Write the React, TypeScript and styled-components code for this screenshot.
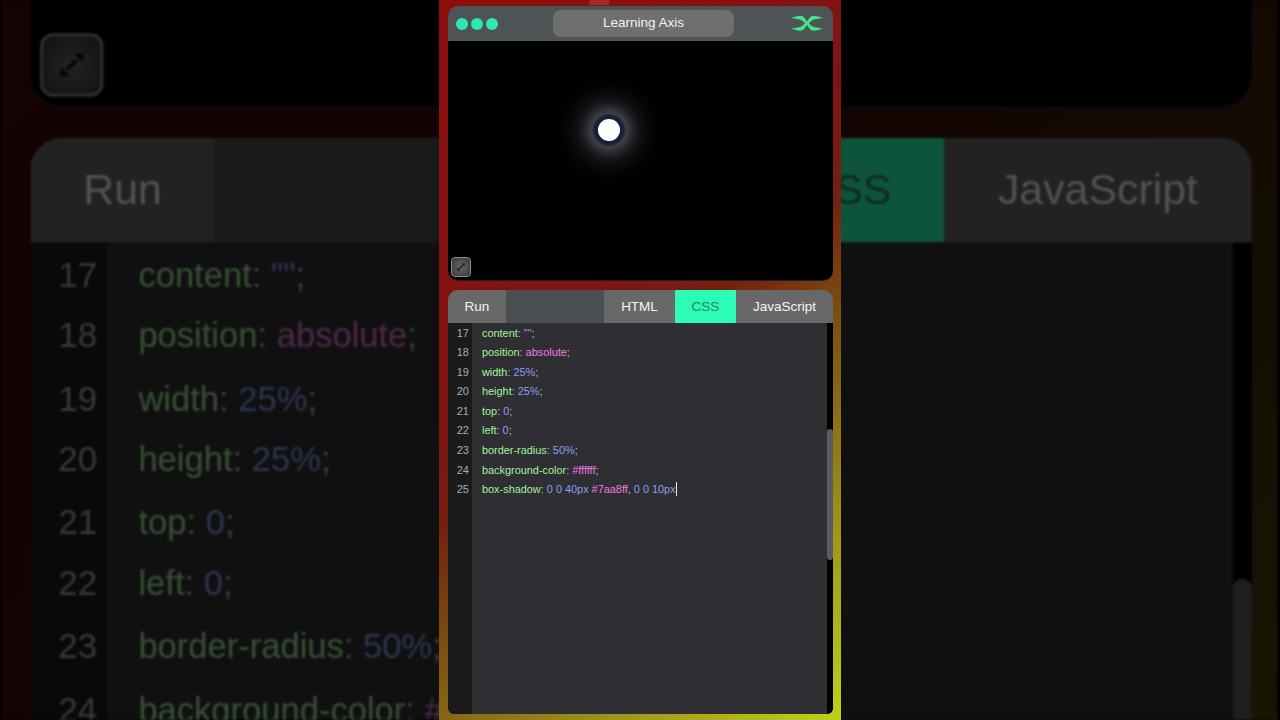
import styled, { createGlobalStyle } from 'styled-components';

type TokenKind = 'prop' | 'punct' | 'num' | 'pink';

const CODE_LINES: { no: number; tokens: [TokenKind, string][]; caret?: boolean }[] = [
  { no: 17, tokens: [['prop', 'content'], ['punct', ': '], ['num', '""'], ['punct', ';']] },
  { no: 18, tokens: [['prop', 'position'], ['punct', ': '], ['pink', 'absolute'], ['punct', ';']] },
  { no: 19, tokens: [['prop', 'width'], ['punct', ': '], ['num', '25%'], ['punct', ';']] },
  { no: 20, tokens: [['prop', 'height'], ['punct', ': '], ['num', '25%'], ['punct', ';']] },
  { no: 21, tokens: [['prop', 'top'], ['punct', ': '], ['num', '0'], ['punct', ';']] },
  { no: 22, tokens: [['prop', 'left'], ['punct', ': '], ['num', '0'], ['punct', ';']] },
  { no: 23, tokens: [['prop', 'border-radius'], ['punct', ': '], ['num', '50%'], ['punct', ';']] },
  { no: 24, tokens: [['prop', 'background-color'], ['punct', ': '], ['pink', '#ffffff'], ['punct', ';']] },
  {
    no: 25,
    tokens: [
      ['prop', 'box-shadow'],
      ['punct', ': '],
      ['num', '0 0 40px '],
      ['pink', '#7aa8ff'],
      ['punct', ', '],
      ['num', '0 0 10px'],
    ],
    caret: true,
  },
];

const TOKEN_COLORS: Record<TokenKind, string> = {
  prop: '#a6f29a',
  punct: '#b9bcc0',
  num: '#8b9df2',
  pink: '#f07ae0',
};

const GlobalStyle = createGlobalStyle`
  html, body {
    margin: 0;
    padding: 0;
    background: #000;
  }
`;

const Page = styled.div`
  position: relative;
  width: 1280px;
  height: 720px;
  overflow: hidden;
  display: flex;
  justify-content: center;
  background: #000;
  font-family: "Liberation Sans", Arial, sans-serif;
`;

// Enlarged, dimmed copy of the same window behind the real one
const Backdrop = styled.div`
  position: absolute;
  inset: 0;
  overflow: hidden;
  filter: brightness(0.33) blur(0.8px);
`;

const BackdropZoom = styled.div`
  width: 402px;
  height: 720px;
  transform-origin: 0 0;
  transform: translate(2px, -782px) scale(3.172);
`;

const Frame = styled.div<{ $muted?: boolean }>`
  position: relative;
  box-sizing: border-box;
  width: 402px;
  height: 720px;
  flex: none;
  display: flex;
  flex-direction: column;
  padding: 6px 8px 6px 9px;
  background: ${props => (props.$muted ? 'linear-gradient(rgba(0, 0, 0, 0.5), rgba(0, 0, 0, 0.5)),' : '')}
    linear-gradient(
      140deg,
      #8e0d0d 0%,
      #7f1414 40%,
      #74200f 50%,
      #7a4a10 60%,
      #8a6c16 70%,
      #a5a01c 85%,
      #bdd216 100%
    );

  &::before {
    content: '';
    position: absolute;
    top: 0;
    left: 150px;
    width: 20px;
    height: 5px;
    background: #a42a2a;
  }
`;

const TitleBar = styled.div`
  height: 35px;
  flex: none;
  display: flex;
  align-items: center;
  padding: 0 9px 0 8px;
  background: #4e5356;
  border-radius: 10px 10px 0 0;
`;

const Dots = styled.div`
  display: flex;
  gap: 3px;
  width: 97px;
  margin-top: 1px;
`;

const Dot = styled.span`
  width: 12px;
  height: 12px;
  border-radius: 50%;
  background: #2de8b0;
`;

const TitlePill = styled.div`
  box-sizing: border-box;
  width: 181px;
  height: 27px;
  padding-bottom: 2px;
  display: flex;
  align-items: center;
  justify-content: center;
  border-radius: 8px;
  background: #6f6f6f;
  color: #f2f2f2;
  font-size: 13.5px;
`;

const Logo = styled.svg`
  width: 34px;
  height: 17px;
  margin-left: auto;
`;

const Preview = styled.div`
  position: relative;
  height: 240px;
  flex: none;
  background: #000;
  border-radius: 0 0 10px 10px;
  box-shadow: inset 0 -1px 0 rgba(255, 255, 255, 0.12);
`;

const GlowBall = styled.div`
  position: absolute;
  left: 150px;
  top: 78px;
  width: 22px;
  height: 22px;
  border-radius: 50%;
  background: #fff;
  box-shadow: 0 0 2px 5px #182038, 0 0 12px 8px #50535c, 0 0 30px 14px #4a4c55;
`;

const ExpandButton = styled.div`
  position: absolute;
  left: 3px;
  bottom: 4px;
  box-sizing: border-box;
  width: 20px;
  height: 20px;
  display: flex;
  align-items: center;
  justify-content: center;
  border: 1px solid #8c8c8c;
  border-radius: 4px;
  background: radial-gradient(circle, #6a6a6a 0%, #343434 100%);
`;

const TabBar = styled.div`
  height: 33px;
  flex: none;
  margin-top: 9px;
  display: flex;
  overflow: hidden;
  background: #4a4f52;
  border-radius: 10px 10px 0 0;
`;

const Tab = styled.div<{ $width: number; $active?: boolean }>`
  width: ${props => props.$width}px;
  display: flex;
  align-items: center;
  justify-content: center;
  font-size: 13.5px;
  background: ${props => (props.$active ? '#2bfcb6' : '#686868')};
  color: ${props => (props.$active ? '#2f7f66' : '#f4f4f4')};
`;

const TabSpacer = styled.div`
  flex: 1;
`;

const Editor = styled.div`
  flex: 1;
  min-height: 0;
  display: flex;
  overflow: hidden;
  background: #2f2f33;
  border-radius: 0 0 6px 6px;
`;

const Gutter = styled.div`
  width: 24px;
  flex: none;
  padding-top: 0.5px;
  background: #1b1b1c;
`;

const LineNumber = styled.div`
  height: 19.6px;
  line-height: 19.6px;
  padding-right: 3px;
  text-align: right;
  font-size: 11px;
  color: #a9abad;
`;

const Code = styled.div`
  flex: 1;
  padding: 0.5px 0 0 10px;
`;

const CodeLine = styled.div`
  height: 19.6px;
  line-height: 19.6px;
  font-size: 10.9px;
  white-space: pre;
`;

const Token = styled.span<{ $kind: TokenKind }>`
  color: ${props => TOKEN_COLORS[props.$kind]};
`;

const Caret = styled.span`
  display: inline-block;
  width: 1px;
  height: 14px;
  vertical-align: -3px;
  background: #e8e8e8;
`;

const ScrollTrack = styled.div`
  width: 6px;
  flex: none;
  background: #000;
`;

const ScrollThumb = styled.div`
  height: 131px;
  margin-top: 106px;
  border-radius: 3px;
  background: #5c5c5e;
`;

function AppWindow({ muted }: { muted?: boolean }) {
  return (
    <Frame $muted={muted}>
      <TitleBar>
        <Dots>
          <Dot />
          <Dot />
          <Dot />
        </Dots>
        <TitlePill>Learning Axis</TitlePill>
        <Logo viewBox="0 0 34 17">
          <path
            d="M1 3 Q6 1 10 0.8 Q13 0.8 14.5 3 L17 6.5 L19.5 3 Q21 0.8 24 0.8 Q28 1 33 3 Q27 3.6 24 4.5 Q21 5.6 19 8.3 Q21 11 24 12.1 Q27 13 33 13.6 Q28 15.6 24 15.8 Q21 15.8 19.5 13.6 L17 10.1 L14.5 13.6 Q13 15.8 10 15.8 Q6 15.6 1 13.6 Q7 13 10 12.1 Q13 11 15 8.3 Q13 5.6 10 4.5 Q7 3.6 1 3 Z"
            fill="#3fe88a"
          />
        </Logo>
      </TitleBar>

      <Preview>
        <GlowBall />
        <ExpandButton>
          <svg width="12" height="12" viewBox="0 0 12 12" fill="none">
            <path d="M4.5 7.5 L7.5 4.5" stroke="#111" strokeWidth="1.2" />
            <path d="M6.6 2.4 H9.6 V5.4 Z" fill="#111" />
            <path d="M2.4 6.6 V9.6 H5.4 Z" fill="#111" />
          </svg>
        </ExpandButton>
      </Preview>

      <TabBar>
        <Tab $width={58}>Run</Tab>
        <TabSpacer />
        <Tab $width={71}>HTML</Tab>
        <Tab $width={61} $active>
          CSS
        </Tab>
        <Tab $width={97}>JavaScript</Tab>
      </TabBar>

      <Editor>
        <Gutter>
          {CODE_LINES.map(line => (
            <LineNumber key={line.no}>{line.no}</LineNumber>
          ))}
        </Gutter>
        <Code>
          {CODE_LINES.map(line => (
            <CodeLine key={line.no}>
              {line.tokens.map(([kind, text], i) => (
                <Token key={i} $kind={kind}>
                  {text}
                </Token>
              ))}
              {line.caret && <Caret />}
            </CodeLine>
          ))}
        </Code>
        <ScrollTrack>
          <ScrollThumb />
        </ScrollTrack>
      </Editor>
    </Frame>
  );
}

export default function App() {
  return (
    <Page>
      <GlobalStyle />
      <Backdrop aria-hidden="true">
        <BackdropZoom>
          <AppWindow muted />
        </BackdropZoom>
      </Backdrop>
      <AppWindow />
    </Page>
  );
}
